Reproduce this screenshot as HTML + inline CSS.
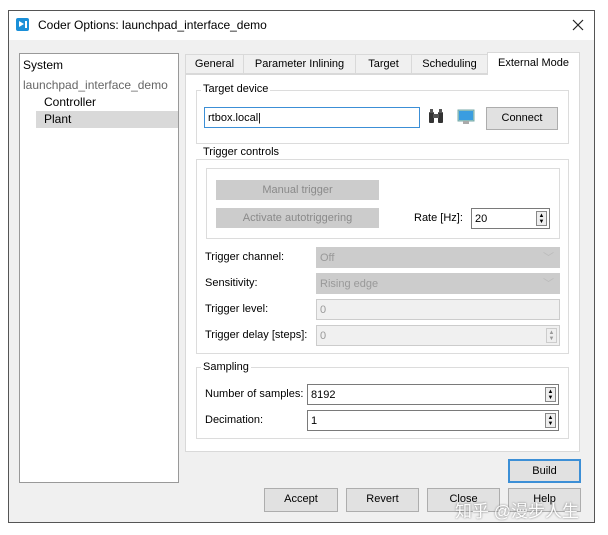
<!DOCTYPE html>
<html><head><meta charset="utf-8"><style>
*{box-sizing:border-box;margin:0;padding:0}
body{width:608px;height:535px;background:#fff;font-family:"Liberation Sans","Noto Sans CJK SC",sans-serif;font-size:11px;color:#000;position:relative;overflow:hidden}
.a{position:absolute}
.win{left:8px;top:10px;width:587px;height:513px;border:1px solid #555;background:#f0f0f0}
.title{left:9px;top:11px;width:585px;height:29px;background:#fff}
.btn{position:absolute;background:#e1e1e1;border:1px solid #adadad;text-align:center;font-size:11px;line-height:21px}
.dis{background:#ccc;border-color:#ccc;color:#8a8a8a}
.grp{position:absolute;border:1px solid #dcdcdc}
.gl{position:absolute;background:#fff;padding:0 2px;font-size:11px}
.in{position:absolute;background:#fff;border:1px solid #7a7a7a;padding-left:3px;line-height:20px}
.di{position:absolute;background:#f0f0f0;border:1px solid #ccc;color:#999;padding-left:3px;line-height:20px}
.cb{position:absolute;background:#ccc;border:1px solid #ccc;color:#999;padding-left:3px;line-height:20px}
.sp{position:absolute;right:2px;top:2px;width:11px;height:15px;border:1px solid #888;background:#eee;font-size:6px;line-height:6px;text-align:center;padding-top:1px}
.lab{position:absolute}
.tab{position:absolute;top:54px;height:20px;border:1px solid #d9d9d9;background:#f0f0f0;text-align:center;line-height:19px}
</style></head><body>
<div class="a win"></div>
<div class="a title"></div>
<div class="a" style="left:16px;top:18px;width:13px;height:13px;background:#1a8fd8;border-radius:2px"></div>
<div class="a" style="left:19px;top:21px;width:0;height:0;border-left:5px solid #fff;border-top:3.5px solid transparent;border-bottom:3.5px solid transparent"></div>
<div class="a" style="left:25px;top:21px;width:1.5px;height:7px;background:#fff"></div>
<div class="a" style="left:38px;top:18px;font-size:12px">Coder Options: launchpad_interface_demo</div>
<svg class="a" style="left:572px;top:19px" width="12" height="12"><path d="M1 1L11 11M11 1L1 11" stroke="#222" stroke-width="1.2"/></svg>

<div class="a" style="left:19px;top:53px;width:160px;height:430px;background:#fff;border:1px solid #999"></div>
<div class="a" style="left:23px;top:58px;font-size:12px">System</div>
<div class="a" style="left:23px;top:78px;font-size:12px;color:#666">launchpad_interface_demo</div>
<div class="a" style="left:44px;top:95px;font-size:12px">Controller</div>
<div class="a" style="left:36px;top:111px;width:142px;height:17px;background:#d9d9d9"></div>
<div class="a" style="left:44px;top:112px;font-size:12px">Plant</div>

<div class="a" style="left:185px;top:74px;width:395px;height:378px;background:#fff;border:1px solid #d9d9d9"></div>
<div class="tab" style="left:185px;width:59px">General</div>
<div class="tab" style="left:243px;width:113px">Parameter Inlining</div>
<div class="tab" style="left:355px;width:57px">Target</div>
<div class="tab" style="left:411px;width:77px">Scheduling</div>
<div class="tab" style="left:487px;top:52px;height:23px;width:93px;background:#fff;border-bottom:none;line-height:21px">External Mode</div>

<div class="grp" style="left:196px;top:90px;width:373px;height:54px"></div>
<div class="gl" style="left:201px;top:83px">Target device</div>
<div class="in" style="left:204px;top:107px;width:216px;height:21px;border-color:#3c8fd6">rtbox.local|</div>
<div class="a" style="left:428px;top:109px;width:16px;height:15px">
<svg width="16" height="15"><rect x="1" y="3" width="5" height="11" rx="1" fill="#333"/><rect x="10" y="3" width="5" height="11" rx="1" fill="#333"/><rect x="5" y="5" width="6" height="4" fill="#555"/><rect x="2" y="0" width="3" height="4" fill="#555"/><rect x="11" y="0" width="3" height="4" fill="#555"/></svg></div>
<div class="a" style="left:457px;top:109px;width:18px;height:16px">
<svg width="18" height="16"><rect x="1" y="1" width="16" height="11" fill="#9cc" stroke="#7aa"/><rect x="2" y="2" width="14" height="9" fill="#3a9de0"/><rect x="6" y="12" width="6" height="3" fill="#aaa"/></svg></div>
<div class="btn" style="left:486px;top:107px;width:72px;height:23px">Connect</div>

<div class="grp" style="left:196px;top:159px;width:373px;height:195px"></div>
<div class="gl" style="left:201px;top:146px">Trigger controls</div>
<div class="grp" style="left:206px;top:168px;width:354px;height:71px"></div>
<div class="btn dis" style="left:216px;top:180px;width:163px;height:20px;line-height:19px">Manual trigger</div>
<div class="btn dis" style="left:216px;top:208px;width:163px;height:20px;line-height:19px">Activate autotriggering</div>
<div class="lab" style="left:414px;top:212px">Rate [Hz]:</div>
<div class="in" style="left:471px;top:208px;width:79px;height:21px">20<div class="sp">▲<br>▼</div></div>

<div class="lab" style="left:205px;top:251px">Trigger channel:</div>
<div class="cb" style="left:316px;top:247px;width:244px;height:21px">Off<span style="position:absolute;right:5px;color:#bbb">﹀</span></div>
<div class="lab" style="left:205px;top:277px">Sensitivity:</div>
<div class="cb" style="left:316px;top:273px;width:244px;height:21px">Rising edge<span style="position:absolute;right:5px;color:#bbb">﹀</span></div>
<div class="lab" style="left:205px;top:303px">Trigger level:</div>
<div class="di" style="left:316px;top:299px;width:244px;height:21px">0</div>
<div class="lab" style="left:205px;top:329px">Trigger delay [steps]:</div>
<div class="di" style="left:316px;top:325px;width:244px;height:21px">0<div class="sp" style="border-color:#ccc;color:#999">▲<br>▼</div></div>

<div class="grp" style="left:196px;top:367px;width:373px;height:72px"></div>
<div class="gl" style="left:201px;top:361px">Sampling</div>
<div class="lab" style="left:205px;top:388px">Number of samples:</div>
<div class="in" style="left:307px;top:384px;width:252px;height:21px">8192<div class="sp">▲<br>▼</div></div>
<div class="lab" style="left:205px;top:414px">Decimation:</div>
<div class="in" style="left:307px;top:410px;width:252px;height:21px">1<div class="sp">▲<br>▼</div></div>

<div class="btn" style="left:508px;top:459px;width:73px;height:24px;border:2px solid #3c8fd6">Build</div>
<div class="btn" style="left:264px;top:488px;width:74px;height:24px">Accept</div>
<div class="btn" style="left:346px;top:488px;width:73px;height:24px">Revert</div>
<div class="btn" style="left:427px;top:488px;width:73px;height:24px">Close</div>
<div class="btn" style="left:508px;top:488px;width:73px;height:24px">Help</div>
<div class="a" style="left:455px;top:497px;font-size:17px;color:#fff;text-shadow:0 0 2px #666;opacity:.9">知乎 @漫步人生</div>
</body></html>
